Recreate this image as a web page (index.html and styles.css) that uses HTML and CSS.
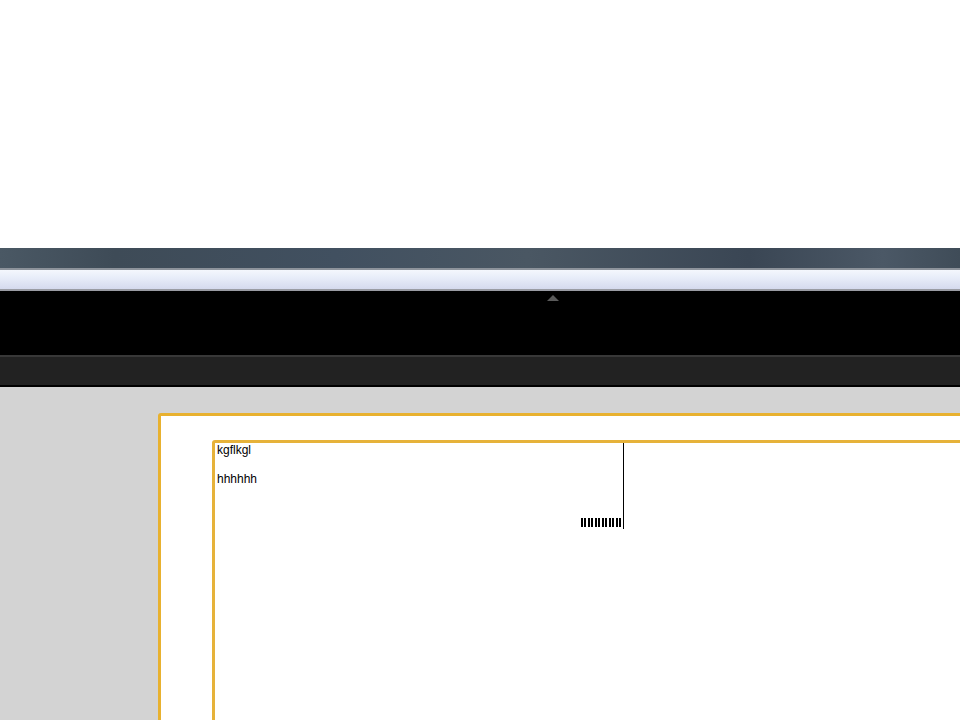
FILE: index.html
```html
<!DOCTYPE html>
<html>
<head>
    <link rel="stylesheet" href="styles.css">
</head>
<body>
    <div class="blank-area"></div>

    <div class="title-bar"></div>
    <div class="menu-bar"></div>
    <div class="ribbon">
        <div class="collapse-arrow"></div>
    </div>
    <div class="status-strip"></div>

    <div class="workspace">
        <div class="page-frame">
            <div class="edit-box">
                <div class="text-column">
                    <p class="line">kgflkgl</p>
                    <p class="line">hhhhhh</p>
                    <div class="tick-marks"></div>
                </div>
            </div>
        </div>
    </div>
</body>
</html>
```

FILE: styles.css
```css
html, body {
    margin: 0;
    height: 100%;
    overflow: hidden;
}

body {
    font-family: "Liberation Sans", Arial, sans-serif;
    background: #ffffff;
}

.blank-area {
    height: 248px;
    background: #ffffff;
}

.title-bar {
    height: 20px;
    background: linear-gradient(90deg, #4a5864 0%, #3e4b57 12%, #415060 35%, #4a5763 55%, #3a4654 78%, #4b5866 92%, #3f4c58 100%);
    border-bottom: 2px solid #8d939b;
}

.menu-bar {
    height: 19px;
    background: linear-gradient(#f4f7fd 0%, #e8edf9 40%, #d5daee 100%);
    border-bottom: 2px solid #9a9ca4;
}

.ribbon {
    height: 66px;
    background: #000000;
    border-bottom: 2px solid #383838;
    padding-top: 4px;
    box-sizing: border-box;
}

.collapse-arrow {
    width: 0;
    height: 0;
    margin-left: 547px;
    border-left: 6px solid transparent;
    border-right: 6px solid transparent;
    border-bottom: 6px solid #5a5a5a;
}

.status-strip {
    height: 28px;
    background: #222222;
    border-bottom: 2px solid #000000;
}

.workspace {
    background: #d3d3d3;
    padding: 26px 0 0 158px;
    height: 400px;
}

.page-frame {
    width: 900px;
    height: 400px;
    background: #ffffff;
    border: 3px solid #e8b12f;
    border-radius: 3px 0 0 0;
    padding: 24px 0 0 51px;
}

.edit-box {
    width: 900px;
    height: 400px;
    border: 3px solid #e6b23a;
    border-radius: 3px 0 0 0;
    display: flex;
}

.text-column {
    width: 408px;
    height: 86px;
    border-right: 1px solid #000000;
    display: flex;
    flex-direction: column;
}

.line {
    margin: 0 0 15px 2px;
    font-size: 12px;
    line-height: 14px;
    color: #000000;
}

.tick-marks {
    align-self: flex-end;
    margin-top: auto;
    margin-bottom: 2px;
    width: 42px;
    height: 9px;
    background: repeating-linear-gradient(90deg, #000000 0, #000000 2px, #ffffff 2px, #ffffff 3.5px);
}
```
